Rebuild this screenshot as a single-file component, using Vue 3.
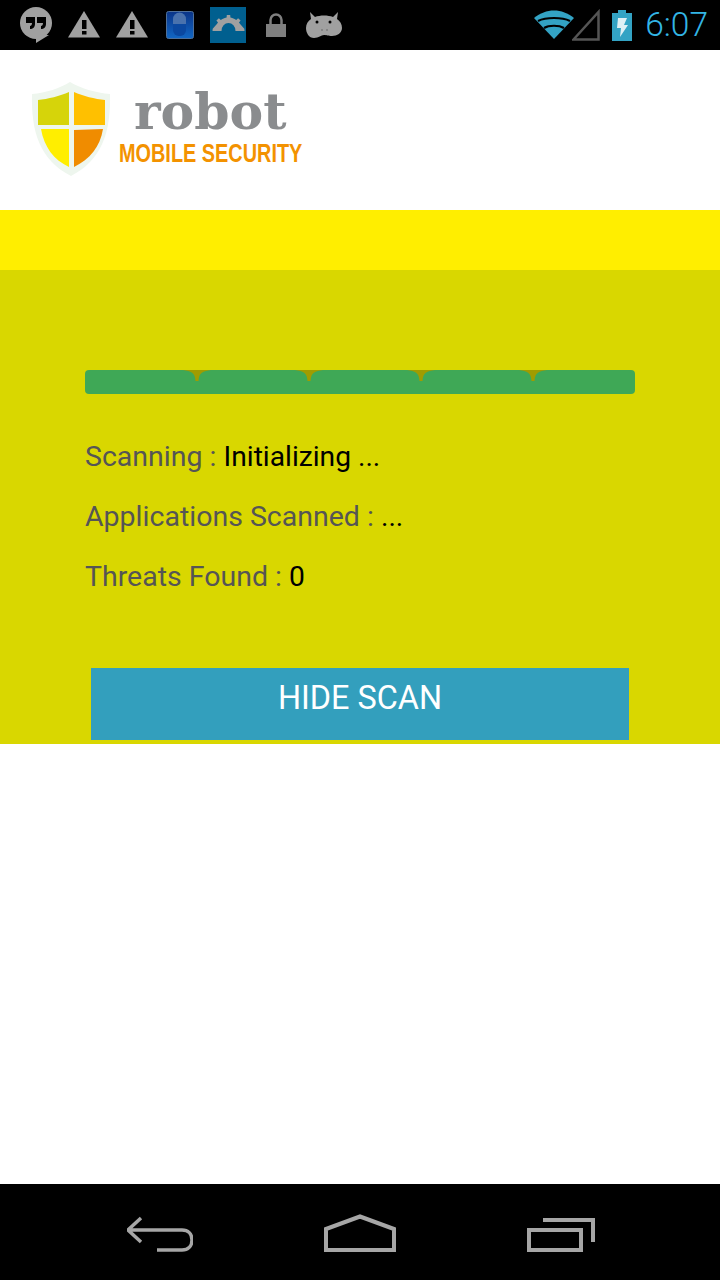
<template>
  <div class="screen">
    <div class="status-bar">
      <div class="status-left">
        <svg class="ic-hangouts" width="32" height="36" viewBox="0 0 32 36">
          <circle cx="16" cy="16" r="16" fill="#a0a0a0" />
          <path d="M16 28H29L16 36z" fill="#a0a0a0" />
          <path d="M6 10H15V17C15 20 13 22 10 22V19C11 19 12 18 12 16H6zM17 10H26V17C26 20 24 22 21 22V19C22 19 23 18 23 16H17z" fill="#000" />
        </svg>
        <svg class="ic-warn" width="32" height="30" viewBox="0 0 32 30" v-for="n in 2" :key="n">
          <path d="M16 1 32 27.500H0z" fill="#a0a0a0" />
          <rect x="14" y="10" width="4.500" height="9" fill="#000" />
          <rect x="14" y="21" width="4.500" height="3.500" fill="#000" />
        </svg>
        <svg class="ic-blue" width="28" height="28" viewBox="0 0 28 28">
          <defs>
            <linearGradient id="blueBg" x1="0" y1="0" x2="0" y2="1">
              <stop offset="0" stop-color="#0a3488" />
              <stop offset="1" stop-color="#1267c4" />
            </linearGradient>
          </defs>
          <rect x=".5" y=".5" width="27" height="27" rx="2" fill="url(#blueBg)" stroke="#4f7099" />
          <rect x="7" y="2" width="13" height="23" rx="6" fill="#0b48a0" />
          <path d="M7 13V8a6 6 0 0 1 13 0v5z" fill="#4a72ad" />
        </svg>
        <div class="gear-box">
          <svg width="36" height="36" viewBox="0 0 36 36">
            <path :d="gearPath" fill="#a0a0a0" />
          </svg>
        </div>
        <svg class="ic-lock" width="20" height="24" viewBox="0 0 20 24">
          <path d="M4.500 11V7a5.500 5.500 0 0 1 11 0v4" fill="none" stroke="#7f7f7f" stroke-width="2.500" />
          <rect y="11" width="20" height="13" fill="#7f7f7f" />
        </svg>
        <svg class="ic-android" width="36" height="28" viewBox="0 0 36 28">
          <path d="M4 1 9 6C14 4 22 4 27 6L32 1 31 8C34 10 36 13 36 17 36 22 31 25 26 25 22 25 21 24 18 24 15 24 13 27 8 27 3 27 0 22 0 17 0 13 2 10 5 8z" fill="#a0a0a0" />
          <circle cx="11" cy="11" r="1.500" fill="#000" />
          <circle cx="24" cy="11" r="1.500" fill="#000" />
          <circle cx="16" cy="19" r=".7" fill="#555" />
          <circle cx="21" cy="19" r=".7" fill="#555" />
        </svg>
      </div>
      <div class="status-right">
        <svg class="ic-wifi" width="40" height="30" viewBox="0 0 40 30">
          <path d="M20 29 0 8C12-2 28-2 40 8z" fill="#33a3c4" />
          <path d="M4 11C12 7 28 7 36 11M10 18C15 15 25 15 30 18" fill="none" stroke="#000" stroke-width="2.200" />
        </svg>
        <svg class="ic-signal" width="28" height="32" viewBox="0 0 28 32">
          <path d="M1.500 30.500 26.500 3V30.500z" fill="none" stroke="#555" stroke-width="2.500" />
        </svg>
        <svg class="ic-battery" width="20" height="31" viewBox="0 0 20 31">
          <path d="M6 0H14V3H20V31H0V3H6z" fill="#33a3c4" />
          <path d="M6 8H15L12 15H16L8 27 9 18H5z" fill="#dff0f5" />
        </svg>
        <span class="clock">6:07</span>
      </div>
    </div>

    <header class="header">
      <svg class="shield" width="82" height="96" viewBox="0 0 82 96">
        <path d="M40 0C50 6 66 11 80 12 81 50 72 78 41 94 10 78 1 50 2 12 16 11 30 6 40 0z" fill="#eef6ee" />
        <path d="M8 18C18 17 30 14 39 10V43H8z" fill="#d6d40a" />
        <path d="M44 10C53 14 65 17 75 18V43H44z" fill="#ffc000" />
        <path d="M11 47H39V85C24 78 14 65 11 47z" fill="#ffee00" />
        <path d="M44 48 73 47C70 65 60 77 44 85z" fill="#f08c00" />
      </svg>
      <div class="logo-text">
        <span class="logo-robot">robot</span>
        <span class="logo-sub">MOBILE SECURITY</span>
      </div>
    </header>

    <div class="band"></div>

    <section class="panel">
      <div class="progress">
        <svg class="tick" v-for="n in 4" :key="n" width="36" height="11" viewBox="0 0 36 11">
          <path d="M4 0H32C24 1.500 20 2 19.500 11H16.500C16 2 12 1.500 4 0z" fill="#a09c00" />
        </svg>
      </div>
      <div class="rows">
        <p class="row" v-for="row in rows" :key="row.label">
          <span class="label">{{ row.label }} : </span><span class="value">{{ row.value }}</span>
        </p>
      </div>
      <button class="hide-btn">HIDE SCAN</button>
    </section>

    <main class="blank"></main>

    <nav class="nav-bar">
      <svg width="66" height="38" viewBox="0 0 66 38">
        <path d="M14 4 1 16 14 28M1 16H55C61 16 65 20 65 26S61 36 55 36H30" fill="none" stroke="#a6a6a6" stroke-width="3.500" />
      </svg>
      <svg width="72" height="38" viewBox="0 0 72 38">
        <path d="M2 36V15L36 2.500 70 15V36z" fill="none" stroke="#a6a6a6" stroke-width="4" />
      </svg>
      <svg width="68" height="38" viewBox="0 0 68 38">
        <path d="M16 6H66V28" fill="none" stroke="#a6a6a6" stroke-width="4" />
        <rect x="2" y="16" width="52" height="20" fill="none" stroke="#a6a6a6" stroke-width="4" />
      </svg>
    </nav>
  </div>
</template>

<script setup>
const rows = [
  { label: 'Scanning', value: 'Initializing ...' },
  { label: 'Applications Scanned', value: '...' },
  { label: 'Threats Found', value: '0' },
]

// half cog from the status bar notification, teeth spread over 180deg
function buildGear(cx, cy, outer, root) {
  const pt = (deg, r) => {
    const a = (deg * Math.PI) / 180
    return `${(cx - Math.cos(a) * r).toFixed(1)} ${(cy - Math.sin(a) * r).toFixed(1)}`
  }
  const parts = [`M${cx - outer} ${cy}`, `L${pt(8, outer)}`]
  for (const deg of [47, 90, 133]) {
    parts.push(`L${pt(deg - 16, root)}`, `L${pt(deg - 8, root)}`)
    parts.push(`L${pt(deg - 6, outer)}`, `L${pt(deg + 6, outer)}`)
    parts.push(`L${pt(deg + 8, root)}`, `L${pt(deg + 16, root)}`)
  }
  parts.push(`L${pt(172, outer)}`, `L${cx + outer} ${cy}`)
  parts.push(`H${cx + 7}`, `A7 8 0 0 0 ${cx - 7} ${cy}`, 'Z')
  return parts.join(' ')
}

const gearPath = buildGear(18.5, 24, 16, 13.5)
</script>

<style>
body {
  background: #fff;
}
</style>

<style scoped>
.screen {
  width: 720px;
  height: 1280px;
  display: flex;
  flex-direction: column;
  background: #fff;
  font-family: Roboto, "Liberation Sans", sans-serif;
  overflow: hidden;
}

.status-bar {
  height: 50px;
  flex: none;
  background: #000;
  display: flex;
  align-items: center;
  justify-content: space-between;
}

.status-left {
  display: flex;
  align-items: center;
  padding-left: 20px;
}

.ic-warn {
  margin-left: 16px;
}

.ic-blue {
  margin-left: 18px;
}

.gear-box {
  width: 36px;
  height: 36px;
  margin-left: 16px;
  background: #005f8f;
}

.ic-lock {
  margin-left: 20px;
}

.ic-android {
  margin-left: 20px;
}

.status-right {
  display: flex;
  align-items: center;
  padding-right: 12px;
}

.ic-signal {
  margin-left: -2px;
}

.ic-battery {
  margin-left: 12px;
}

.clock {
  margin-left: 13px;
  color: #33b5e5;
  font-size: 33.500px;
  font-weight: 300;
  line-height: 50px;
}

.header {
  height: 160px;
  flex: none;
  display: flex;
  align-items: center;
  padding-left: 30px;
}

.logo-text {
  display: flex;
  flex-direction: column;
  margin-left: 7px;
  padding-bottom: 3px;
}

.logo-robot {
  margin-left: 15px;
  font-family: "DejaVu Serif", "Liberation Serif", serif;
  font-weight: 700;
  font-size: 50.500px;
  line-height: 46px;
  color: #8a8c8e;
}

.logo-sub {
  margin-top: 3px;
  font-family: "Liberation Sans", Arial, sans-serif;
  font-weight: 700;
  font-size: 25px;
  line-height: 30px;
  color: #f39200;
  transform: scaleX(0.795);
  transform-origin: left center;
  white-space: nowrap;
}

.band {
  height: 60px;
  flex: none;
  background: #ffee00;
}

.panel {
  height: 474px;
  flex: none;
  box-sizing: border-box;
  padding: 100px 85px 0;
  background: #d9d700;
}

.progress {
  height: 24px;
  display: flex;
  gap: 76px;
  padding-left: 94px;
  background: #3fa856;
  border-radius: 4px;
}

.rows {
  margin-top: 48px;
}

.row {
  margin: 0 0 30px;
  height: 30px;
  font-size: 28.500px;
  line-height: 30px;
  white-space: pre;
}

.label {
  color: #555;
}

.value {
  color: #000;
  font-size: 28.200px;
}

.hide-btn {
  display: block;
  width: 538px;
  height: 72px;
  margin: 76px 0 0 6px;
  padding: 0 0 12px;
  border: none;
  background: #339fbd;
  color: #fff;
  font-family: inherit;
  font-size: 32.400px;
}

.blank {
  flex: 1;
}

.nav-bar {
  height: 96px;
  flex: none;
  background: #000;
  display: flex;
  align-items: center;
  justify-content: center;
  gap: 131px;
  padding: 2px 0 0 1px;
  box-sizing: border-box;
}
</style>
